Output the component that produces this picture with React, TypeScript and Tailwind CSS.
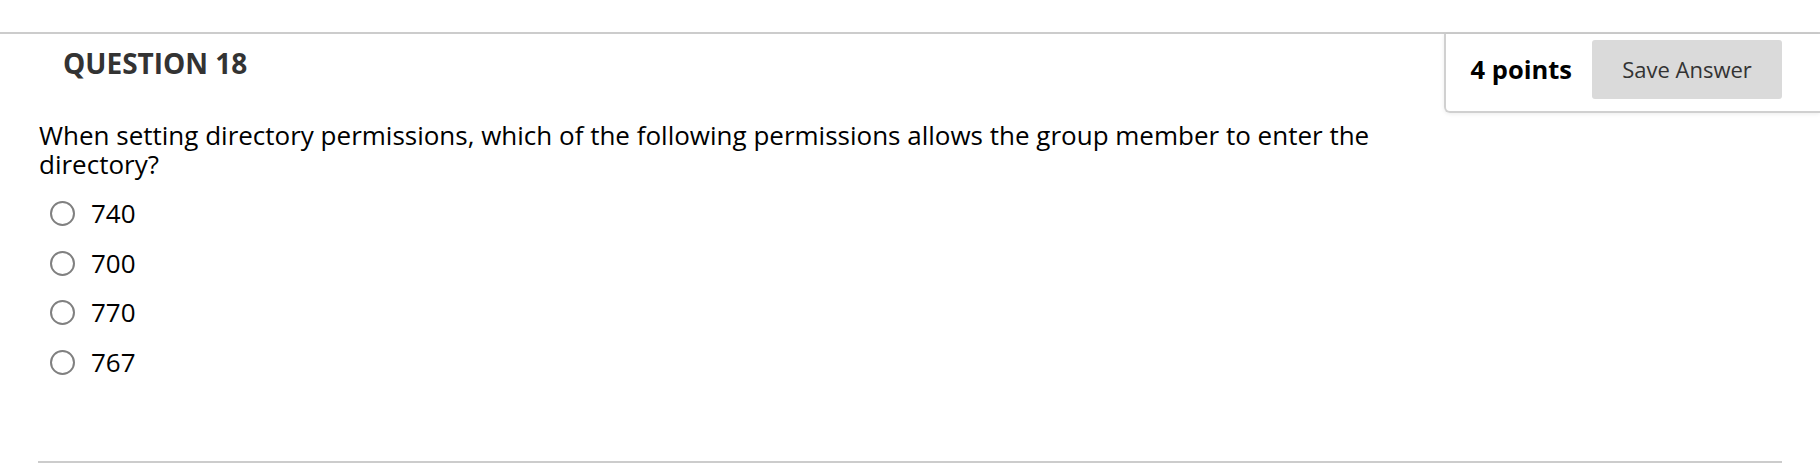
const OPTIONS = ["740", "700", "770", "767"];

export default function App() {
  return (
    <div className="h-[468px] w-full overflow-hidden bg-white font-['Open_Sans',sans-serif]">
      <div className="pt-[32px]">
        <div className="flex items-start justify-between border-t-2 border-[#cccccc]">
          <h2 className="pl-[63px] pt-[12px] text-[28px] leading-[34px] font-bold text-[#333333]">
            QUESTION 18
          </h2>
          <div className="flex items-center gap-5 rounded-bl-md border-b-2 border-l-2 border-[#d0d0d0] pb-[12px] pl-[25px] pr-[38px] pt-[6px] shadow-[0_1px_4px_rgba(0,0,0,0.08)]">
            <span className="text-[25.5px] font-bold text-black">4 points</span>
            <button className="h-[59px] w-[190px] rounded-[3px] bg-[#dadada] text-[22px] text-[#333333]">
              Save Answer
            </button>
          </div>
        </div>
      </div>

      <div className="mx-[38px]">
        <p className="mt-[8px] pl-px text-[26px] leading-[29px] text-black">
          When setting directory permissions, which of the following permissions allows the group member to enter the
          <br />
          directory?
        </p>

        <div className="mt-[10px] flex flex-col">
          {OPTIONS.map((opt) => (
            <label key={opt} className="flex h-[49.5px] items-center gap-4 pl-[12px]">
              <span className="h-[25px] w-[25px] rounded-full border-2 border-[#808080] bg-white" />
              <span className="text-[26px] text-black">{opt}</span>
            </label>
          ))}
        </div>

        <div className="mt-[74px] h-[2px] bg-[#cccccc]" />
      </div>
    </div>
  );
}
